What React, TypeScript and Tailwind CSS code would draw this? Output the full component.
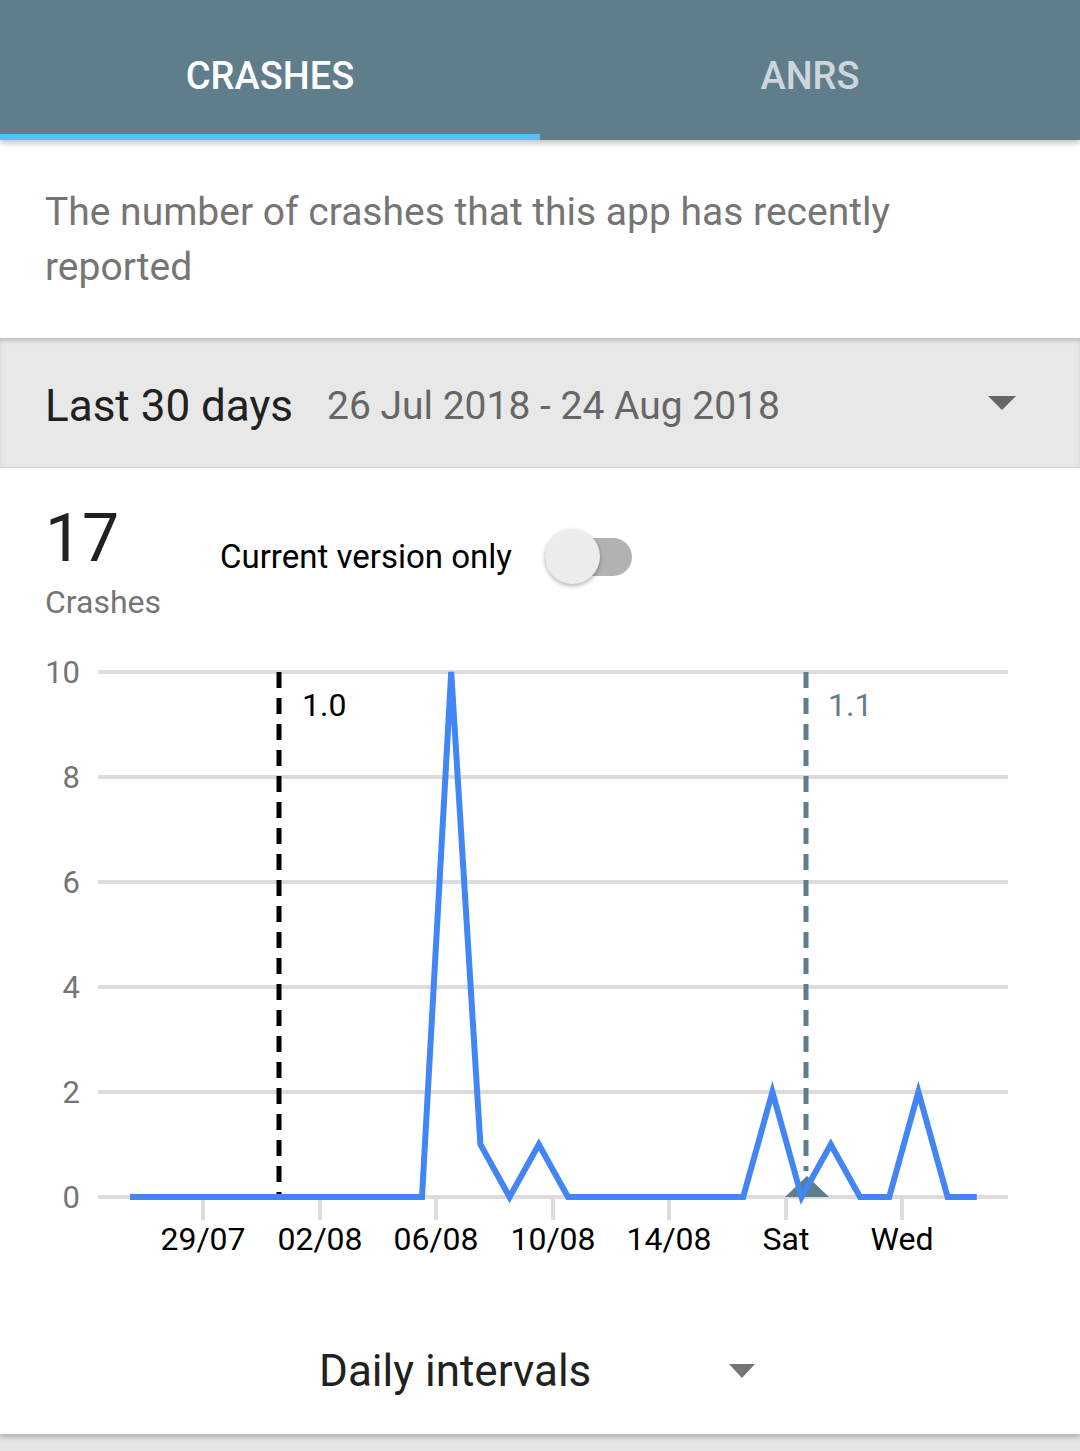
import React from "react";

const crashes = [0, 0, 0, 0, 0, 0, 0, 0, 0, 0, 0, 10, 1, 0, 1, 0, 0, 0, 0, 0, 0, 0, 2, 0, 1, 0, 0, 2, 0, 0];

const ticks = [
  { x: 203, label: "29/07" },
  { x: 320, label: "02/08" },
  { x: 436, label: "06/08" },
  { x: 553, label: "10/08" },
  { x: 669, label: "14/08" },
  { x: 786, label: "Sat" },
  { x: 902, label: "Wed" },
];

const yLevels = [0, 2, 4, 6, 8, 10];
const yOf = (v: number) => 1196 - v * 52.5;

function Chart() {
  const points = crashes.map((v, i) => `${130 + i * 29.2},${yOf(v)}`).join(" ");
  return (
    <svg width={1080} height={660} viewBox="0 639 1080 660" className="block">
      {yLevels.map((v) => (
        <g key={v}>
          <line x1={98} x2={1008} y1={yOf(v)} y2={yOf(v)} stroke="#dcdcdc" strokeWidth={4} />
          <text x={80} y={yOf(v) + 11} textAnchor="end" fontSize={31} fill="#757575">
            {v}
          </text>
        </g>
      ))}
      {ticks.map((t) => (
        <g key={t.label}>
          <line x1={t.x} x2={t.x} y1={1196} y2={1219} stroke="#dcdcdc" strokeWidth={4} />
          <text x={t.x} y={1249} textAnchor="middle" fontSize={32} fill="#000">
            {t.label}
          </text>
        </g>
      ))}
      <line x1={279} x2={279} y1={671} y2={1196} stroke="#000" strokeWidth={5} strokeDasharray="16 10" />
      <text x={302} y={715} fontSize={32} fill="#000">1.0</text>
      <line x1={806} x2={806} y1={671} y2={1170} stroke="#607d8b" strokeWidth={5} strokeDasharray="16 10" />
      <text x={828} y={715} fontSize={32} fill="#607d8b">1.1</text>
      <polygon points="785,1196 807,1175 829,1196" fill="#607d8b" />
      <polyline points={points} fill="none" stroke="#4285f4" strokeWidth={6} />
    </svg>
  );
}

export default function App() {
  return (
    <div className="w-[1080px] h-[1451px] overflow-hidden bg-[#e6e6e6] font-['Roboto',sans-serif]">
      <div className="relative z-10 flex h-[140px] bg-[#607d8b] shadow-[0_3px_6px_rgba(0,0,0,0.25)]">
        <div className="flex w-1/2 flex-col">
          <div className="flex flex-1 items-center justify-center pt-[18px] text-[38px] font-medium text-white">CRASHES</div>
          <div className="h-[6px] bg-[#4fc3f7]" />
        </div>
        <div className="flex w-1/2 flex-col">
          <div className="flex flex-1 items-center justify-center pt-[18px] text-[38px] font-medium text-white/70">ANRS</div>
          <div className="h-[6px]" />
        </div>
      </div>

      <div className="bg-white px-[45px] pt-[45px] pb-[43px]">
        <p className="max-w-[900px] text-[39px] leading-[55px] text-[#757575]">
          The number of crashes that this app has recently reported
        </p>
      </div>

      <div className="flex h-[130px] items-center border-b border-[#d6d6d6] bg-[#e8e8e8] px-[45px] pt-[7px] shadow-[inset_0_4px_5px_-2px_rgba(0,0,0,0.22)]">
        <span className="text-[44px] leading-[52px] text-[#212121]">Last 30 days</span>
        <span className="ml-[34px] text-[39px] leading-[52px] text-[#666]">26 Jul 2018 - 24 Aug 2018</span>
        <span className="ml-auto mr-[19px] mb-[6px] h-0 w-0 border-x-[14px] border-t-[14px] border-x-transparent border-t-[#666]" />
      </div>

      <div className="relative shadow-[0_3px_6px_rgba(0,0,0,0.25)] bg-white">
        <div className="flex h-[172px] items-start px-[45px] pt-[38px]">
          <div className="w-[175px]">
            <div className="text-[66px] leading-[66px] text-[#212121]">17</div>
            <div className="mt-[14px] text-[32px] leading-[32px] text-[#757575]">Crashes</div>
          </div>
          <div className="mt-[23px] flex h-[55px] items-center">
            <span className="text-[33px] text-black">Current version only</span>
            <div className="relative ml-[33px] h-[38px] w-[87px] rounded-full bg-[#b2b2b2]">
              <div className="absolute left-0 top-[-9px] h-[55px] w-[55px] rounded-full bg-[#ececec] shadow-[0_2px_4px_rgba(0,0,0,0.3)]" />
            </div>
          </div>
        </div>

        <Chart />

        <div className="flex h-[134px] items-center pl-[319px] pt-[8px]">
          <span className="text-[44px] leading-[44px] text-[#212121]">Daily intervals</span>
          <span className="ml-[138px] h-0 w-0 border-x-[13px] border-t-[14px] border-x-transparent border-t-[#757575]" />
        </div>
      </div>
    </div>
  );
}
